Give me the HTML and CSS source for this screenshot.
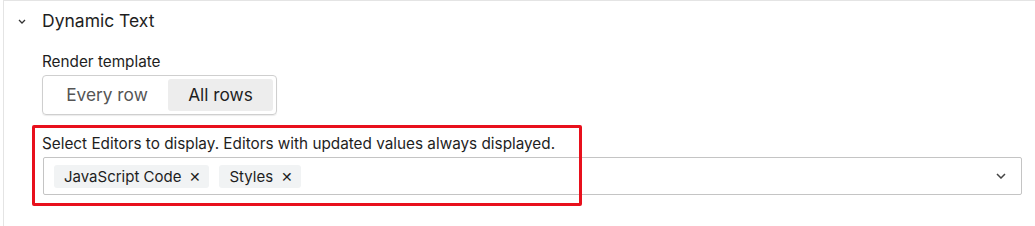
FILE: index.html
```html
<!DOCTYPE html>
<html lang="en">
<head>
    <meta charset="UTF-8">
    <title>Dynamic Text</title>
    <link rel="stylesheet" href="styles.css">
</head>
<body>
    <div class="panel">
        <div class="panel-header">
            <svg class="collapse-icon" viewBox="0 0 8 5">
                <path d="M1 1L4 4L7 1" fill="none" stroke="currentColor" stroke-width="1.3"/>
            </svg>
            <span class="panel-title">Dynamic Text</span>
        </div>

        <div class="panel-body">
            <div class="field-label">Render template</div>
            <div class="segmented">
                <button class="segment">Every row</button>
                <button class="segment active">All rows</button>
            </div>

            <div class="editors-field">
                <div class="highlight"></div>
                <div class="field-label">Select Editors to display. Editors with updated values always displayed.</div>
                <div class="multi-select">
                    <span class="chip">JavaScript Code <span class="chip-x">&#x2715;</span></span>
                    <span class="chip">Styles <span class="chip-x">&#x2715;</span></span>
                    <svg class="select-arrow" viewBox="0 0 10 6">
                        <path d="M1 1L5 5L9 1" fill="none" stroke="currentColor" stroke-width="1.5"/>
                    </svg>
                </div>
            </div>
        </div>
    </div>
</body>
</html>
```

FILE: styles.css
```css
* {
    box-sizing: border-box;
}

body {
    margin: 0;
    background: #fff;
    font-family: 'Inter', 'Liberation Sans', sans-serif;
    color: #1e1e1e;
}

.panel {
    margin-left: 3px;
    height: 226px;
    border-top: 1px solid #e4e4e4;
    border-left: 1px solid #e4e4e4;
}

.panel-header {
    display: flex;
    align-items: center;
    height: 40px;
    padding-left: 14px;
}

.collapse-icon {
    width: 8px;
    height: 5px;
    color: #333;
    margin-right: 16px;
    margin-top: 1px;
}

.panel-title {
    font-size: 17.5px;
    line-height: 20px;
}

.panel-body {
    padding-left: 38px;
    padding-top: 11px;
}

.field-label {
    font-size: 15.3px;
    line-height: 20px;
    margin-bottom: 3px;
}

.segmented {
    display: inline-flex;
    padding: 3px;
    border: 1px solid #cfcfcf;
    border-radius: 4px;
    box-shadow: 0 1px 1px rgba(0, 0, 0, 0.08);
}

.segment {
    border: none;
    background: none;
    font-family: inherit;
    font-size: 17.3px;
    line-height: 20px;
    color: #555;
    height: 32px;
    padding: 0;
    border-radius: 3px;
}

.segment:first-child {
    width: 122px;
}

.segment.active {
    background: #ededed;
    color: #1e1e1e;
    width: 105px;
}

.editors-field {
    position: relative;
    margin-top: 10px;
    padding-top: 9px;
}

.highlight {
    position: absolute;
    left: -10px;
    top: 0;
    width: 550px;
    height: 81px;
    border: 3px solid #e8101c;
    border-radius: 2px;
    pointer-events: none;
}

.multi-select {
    display: flex;
    align-items: center;
    gap: 10px;
    width: 979px;
    height: 38px;
    margin-left: 1px;
    padding: 0 10px;
    border: 1px solid #c4c4c4;
    border-radius: 2px;
}

.chip {
    display: inline-flex;
    align-items: center;
    height: 23px;
    padding: 0 8px 0 10px;
    background: #f1f3f4;
    border-radius: 3px;
    font-size: 15px;
    color: #1e1e1e;
}

.chip-x {
    font-size: 14px;
    margin-left: 8px;
}

.select-arrow {
    width: 10px;
    height: 6px;
    margin-left: auto;
    margin-right: 5px;
    color: #444;
}
```
